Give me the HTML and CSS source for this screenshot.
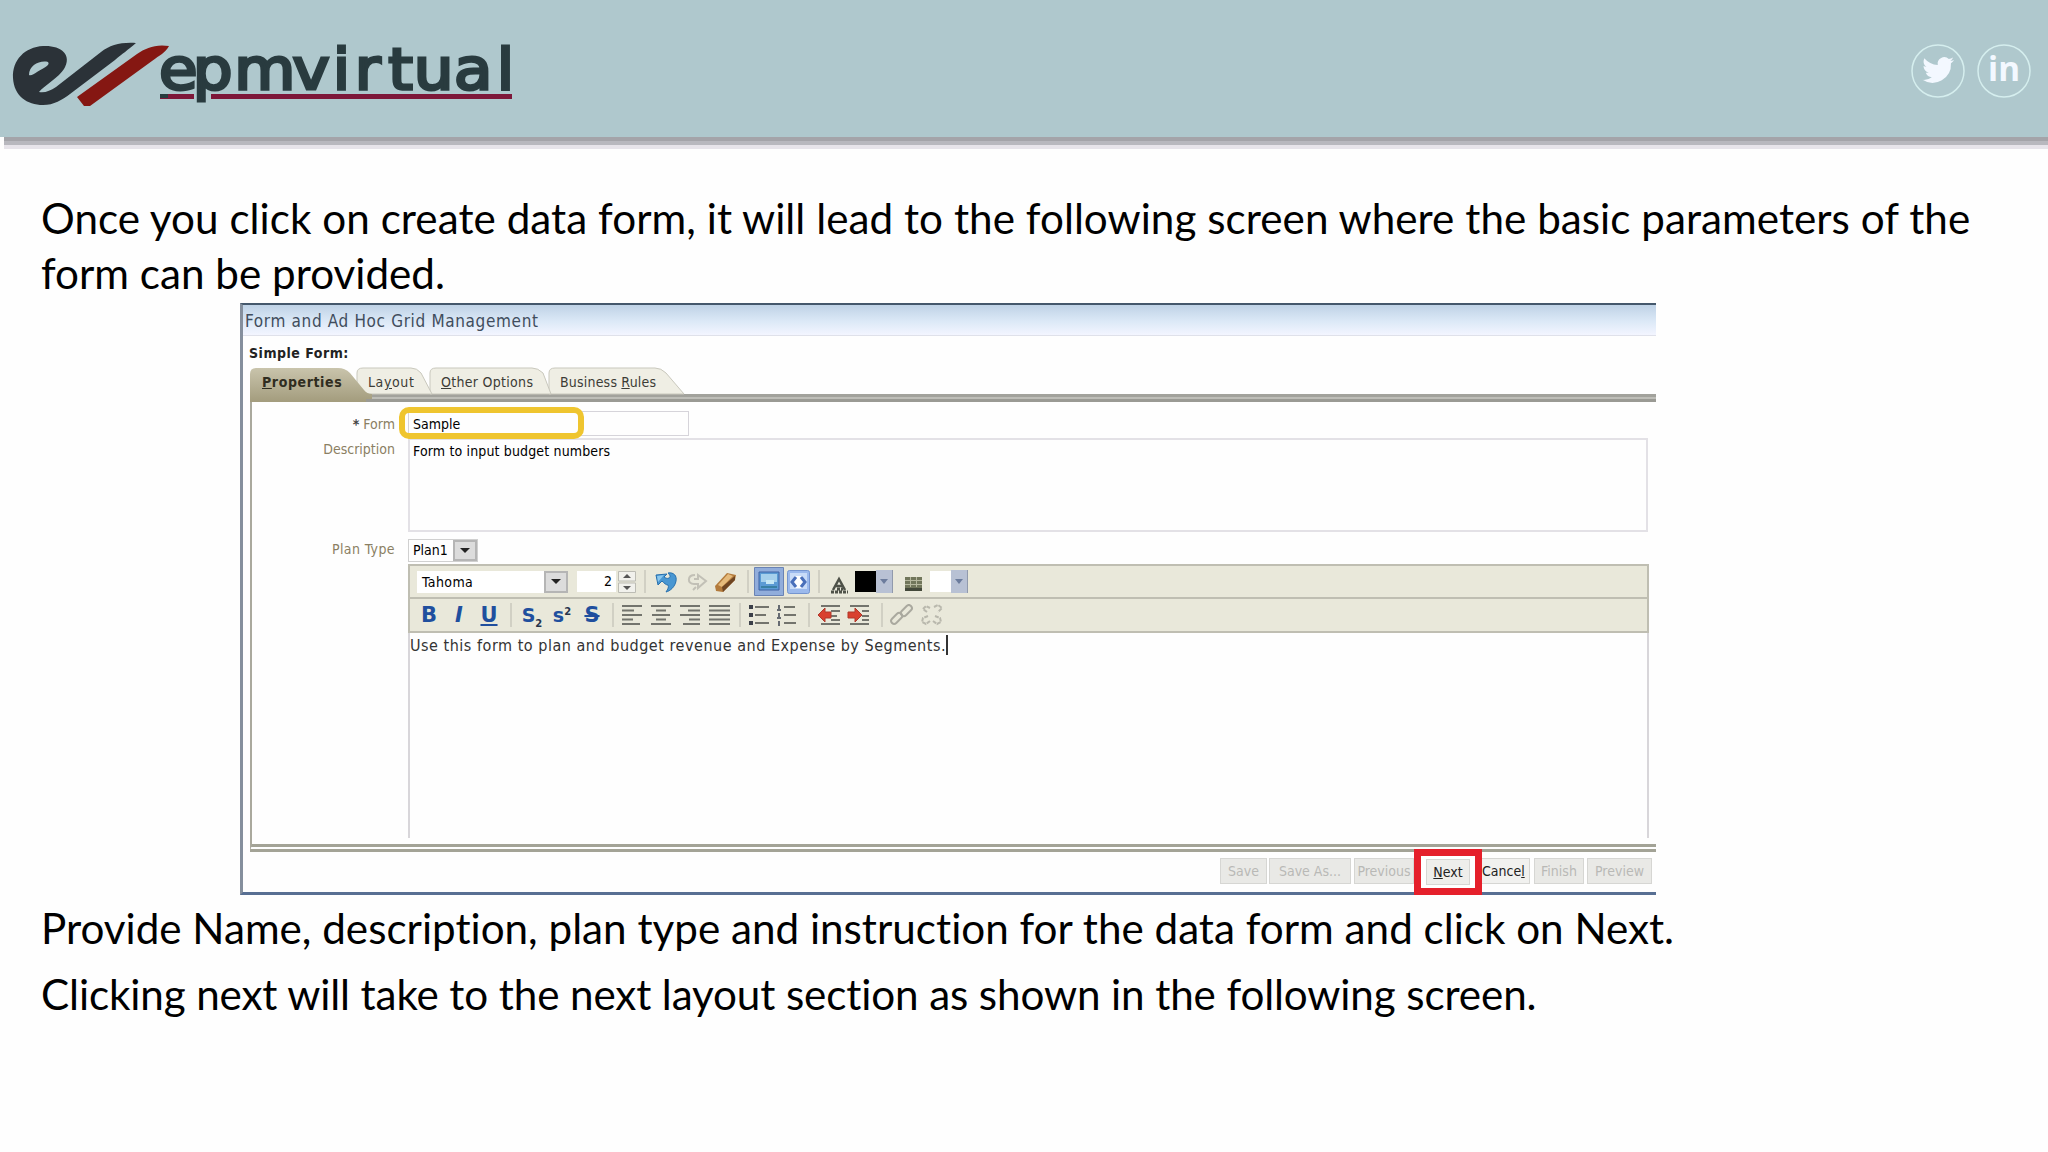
FILE: index.html
```
<!DOCTYPE html>
<html lang="en">
<head>
    <meta charset="UTF-8">
    <meta name="viewport" content="width=device-width, initial-scale=1.0">
    <title>epmvirtual - Create Data Form</title>
    <link rel="stylesheet" href="styles.css">
</head>
<body>

    <header class="header">
        <svg class="logo" width="530" height="80" viewBox="0 0 530 80">
            <path fill="#2b3238" fill-rule="evenodd" d="M136 3C121 2 110 5 101 12L56 47C50 51 45 53 39 52C44 46 59 37 64 29C73 14 60 5 43 6C25 7 12 20 13 38C14 56 27 65 43 65C54 65 62 60 70 54L115 20C122 14 128 10 136 3ZM29 35C29 25 40 20 48 22C51 25 42 29 37 32C34 34 31 36 29 35Z"/>
            <path fill="#851712" d="M169 6C155 4 146 8 137 14L77 57L84 66H90L152 21C160 15 165 13 169 6Z"/>
            <path fill="#7d1739" d="M160 54H194V59H160ZM211 54H512V59H211Z"/>
            <path fill="#293b3f" d="M160 54H168V58H160Z"/>
            <text class="logo-text" transform="scale(1.1 1)" x="144.500 175.300 213 266 302.500 322.500 353 376.200 412.800 451.600" y="49">epmvirtual</text>
        </svg>
        <div class="social">
            <svg width="54" height="54" viewBox="0 0 54 54">
                <circle cx="27" cy="27" r="26" fill="none" stroke="#d5eeee" stroke-width="1.5"/>
                <g transform="translate(11.500 9.500) scale(1.330)"><path fill="#f3f8ff" d="M23.600 4.900c-.9.400-1.800.6-2.800.8 1-.6 1.800-1.600 2.100-2.700-.9.600-2 1-3.100 1.200A4.900 4.900 0 0 0 11.500 8.600C7.500 8.400 3.900 6.500 1.500 3.500.2 5.700.8 8.600 3 10c-.8 0-1.500-.2-2.200-.6 0 2.300 1.600 4.400 3.900 4.900-.7.200-1.500.2-2.200.1.600 1.900 2.400 3.300 4.500 3.400A9.900 9.900 0 0 1 0 19.800a13.900 13.900 0 0 0 21.400-12.400c1-.7 1.800-1.500 2.200-2.500z"/></g>
            </svg>
            <svg width="54" height="54" viewBox="0 0 54 54">
                <circle cx="27" cy="27" r="26" fill="none" stroke="#d5eeee" stroke-width="1.5"/>
                <text class="in-text" x="11" y="37" textLength="32" lengthAdjust="spacingAndGlyphs">in</text>
            </svg>
        </div>
    </header>

    <main class="content">
        <p class="line line-first">Once you click on create data form, it will lead to the following screen where the basic parameters of the</p>
        <p class="line line-second">form can be provided.</p>

        <div class="window">
            <div class="title-bar"><span class="window-title">Form and Ad Hoc Grid Management</span></div>
            <div class="form-name">Simple Form:</div>

            <div class="tabs">
                <svg class="tab-shapes" width="440" height="35" viewBox="0 0 440 35">
                    <defs>
                        <linearGradient id="activeTab" x1="0" y1="0" x2="0" y2="1">
                            <stop offset="0" stop-color="#c9c4ac"/>
                            <stop offset="1" stop-color="#a39c7d"/>
                        </linearGradient>
                    </defs>
                    <g fill="#efeee4" stroke="#c9c8bd">
                        <path d="M299 27V6Q299 1 305 1H405Q411 1 416 6L434 27Z"/>
                        <path d="M180 27V6Q180 1 186 1H282Q288 1 293 6L301 27Z"/>
                        <path d="M107 27V6Q107 1 113 1H161Q167 1 171 6L182 27Z"/>
                    </g>
                    <path fill="url(#activeTab)" d="M0 35V7Q0 1 6 1H88Q95 1 100 6L114 23Q117 27 122 27V32H116V35Z"/>
                </svg>
                <span class="tab tab-active"><u>P</u>roperties</span>
                <span class="tab tab-layout">La<u>y</u>out</span>
                <span class="tab tab-other"><u>O</u>ther Options</span>
                <span class="tab tab-rules">Business <u>R</u>ules</span>
            </div>

            <div class="panel">
                <div class="row row-form">
                    <label class="label"><b>*</b> Form</label>
                    <div class="input"><span class="form-value">Sample</span><div class="highlight"></div></div>
                </div>
                <div class="row row-desc">
                    <label class="label desc-label">Description</label>
                    <div class="textarea"><span class="desc-value">Form to input budget numbers</span></div>
                </div>
                <div class="row row-plan">
                    <label class="label plan-label">Plan Type</label>
                    <div class="select"><span class="plan-value">Plan1</span><span class="arrow"></span></div>
                </div>

                <div class="editor">
                    <div class="toolbar toolbar-top">
                        <div class="font-select"><span class="font-name">Tahoma</span><span class="arrow"></span></div>
                        <div class="size-box">2</div>
                        <svg class="spinner" width="18" height="22" viewBox="0 0 18 22">
                            <path fill="#f1f1ec" stroke="#bcbcb4" d="M.5.500H17.500V10H.500ZM.500 12H17.500V21.500H.500Z"/>
                            <path fill="#555" d="M5 7L9 3L13 7ZM5 15H13L9 19Z"/>
                        </svg>
                        <i class="sep"></i>
                        <svg class="undo" width="24" height="24" viewBox="0 0 24 24">
                            <path fill="#4997d2" stroke="#2770ae" d="M2 5L13 4L10 7C12 8 13 9 15 8C17 7 16 5 14 3C20 2 23 6 22 11C21 17 16 21 12 22C14 19 15 17 14 15C12 15 10 13 8 11L4 15Z"/>
                            <path fill="#8bc8ee" d="M3 6L10 5L4 12Z"/>
                        </svg>
                        <svg class="redo" width="22" height="24" viewBox="0 0 22 24">
                            <path fill="none" stroke="#c2c0b6" stroke-width="2" d="M9 5C1 5 1 14 8 14H12V18L20 11L12 5V9H8M10 17L7 20"/>
                        </svg>
                        <svg class="eraser" width="24" height="24" viewBox="0 0 24 24">
                            <path fill="#b37b3c" d="M1 16L13 3L22 5L21 10L9 22L2 21Z"/>
                            <path fill="#e5ba7b" d="M4 15L14 4L19 6L8 17Z"/>
                            <path fill="#6e4522" d="M8 17L21 6V10L9 22Z"/>
                        </svg>
                        <i class="sep"></i>
                        <svg class="view" width="30" height="29" viewBox="0 0 30 29">
                            <path fill="#91addb" stroke="#6a83b4" d="M.500.500H29.500V28.500H.500Z"/>
                            <path fill="#5b9bd4" stroke="#4063a4" d="M5 5H25V23H5Z"/>
                            <path fill="#a5d0ec" d="M7 7H23V15H7Z"/>
                            <path fill="#c7e8f5" d="M12 13H20V17H12Z"/>
                            <path fill="#3a80a3" d="M7 19H23V21H7Z"/>
                        </svg>
                        <svg class="source" width="23" height="24" viewBox="0 0 23 24">
                            <rect x=".5" y=".5" width="22" height="23" rx="2" fill="#9bb9ec" stroke="#7595cf"/>
                            <path fill="#c9dcf8" d="M3 3H20V19H3Z"/>
                            <path fill="#fff" d="M7 6H16V18H7Z"/>
                            <path fill="none" stroke="#4a70ba" stroke-width="3" d="M9 7L5 12L9 17M14 7L18 12L14 17"/>
                        </svg>
                        <i class="sep"></i>
                        <svg class="color-icon" width="17" height="18" viewBox="0 0 17 18">
                            <path fill="none" stroke="#4e5148" stroke-width="2.500" d="M2 14L8 3L14 14M5 10H12"/>
                            <path stroke="#4e5148" stroke-width="3" stroke-dasharray="3 1" d="M0 16H17M6 13H12"/>
                        </svg>
                        <span class="swatch swatch-black"></span>
                        <span class="swatch-arrow"></span>
                        <svg class="grid-icon" width="17" height="16" viewBox="0 0 17 16">
                            <path fill="#71765b" d="M0 1H17V15H0Z"/>
                            <path stroke="#b6b89f" d="M0 4.500H17M0 8.500H17M5.500 1V11M11.500 1V11"/>
                            <path stroke="#43483a" stroke-width="3" d="M0 13.500H17"/>
                        </svg>
                        <span class="swatch swatch-white"></span>
                        <span class="swatch-arrow"></span>
                    </div>

                    <div class="toolbar toolbar-bottom">
                        <div class="group group-style">
                            <span class="tool">B</span>
                            <span class="tool tool-italic">I</span>
                            <span class="tool"><u>U</u></span>
                        </div>
                        <div class="group group-script">
                            <span class="tool tool-script">S<sub>2</sub></span>
                            <span class="tool tool-script">s<sup>2</sup></span>
                            <span class="tool"><s>S</s></span>
                        </div>
                        <div class="group group-align">
                            <svg width="29" height="22" viewBox="0 0 29 22"><path d="M4 2H24M4 6.500H16M4 11H24M4 15.500H15M4 20H22"/></svg>
                            <svg width="29" height="22" viewBox="0 0 29 22"><path d="M4 2H24M9 6.500H19M5 11H23M9 15.500H19M4 20H24"/></svg>
                            <svg width="29" height="22" viewBox="0 0 29 22"><path d="M4 2H24M12 6.500H24M4 11H24M13 15.500H24M7 20H24"/></svg>
                            <svg width="29" height="22" viewBox="0 0 29 22"><path d="M4 2H25M4 6.500H25M4 11H25M4 15.500H25M4 20H25"/></svg>
                        </div>
                        <div class="group group-list">
                            <svg width="29" height="22" viewBox="0 0 29 22"><path d="M10 3H24M10 11H21M10 19H24"/><path stroke="#3c4049" stroke-width="4" d="M4 3H8M4 11H8M4 19H8"/></svg>
                            <svg width="29" height="22" viewBox="0 0 29 22"><path d="M10 3H21M10 11H22M10 19H22"/><path stroke="#666b72" d="M5 1V6M5 9V14M5 17V22M3 6H7M3 14H7"/></svg>
                        </div>
                        <div class="group group-indent">
                            <svg width="29" height="22" viewBox="0 0 29 22"><path d="M6 2H25M16 7H25M16 12H22M16 16H25M6 20H25"/><path class="red" d="M3 11L10 4V8H16V14H10V18Z"/></svg>
                            <svg width="29" height="22" viewBox="0 0 29 22"><path d="M6 2H25M18 7H25M18 12H25M18 16H25M6 20H25"/><path class="red" d="M18 11L11 4V8H4V14H11V18Z"/></svg>
                        </div>
                        <div class="group group-link">
                            <svg width="30" height="22" viewBox="0 0 30 22"><g fill="none" stroke="#aaa99f" stroke-width="2"><rect x="3" y="11" width="13" height="6" rx="3" transform="rotate(-45 10 14)"/><rect x="13" y="4" width="13" height="6" rx="3" transform="rotate(-45 19 7)"/></g></svg>
                            <svg width="30" height="22" viewBox="0 0 30 22"><g fill="none" stroke="#b9b8ad" stroke-width="2"><path d="M10 8L6 5L9 2L13 4M17 3L21 1L25 4L21 8M11 12L6 14L5 18L9 20L13 17M18 12L23 14L24 18L20 20L16 17" stroke-dasharray="4 1"/></g></svg>
                        </div>
                    </div>
                    <div class="editor-text"><span class="instruction">Use this form to plan and budget revenue and Expense by Segments.</span><i class="caret"></i></div>
                </div>
            </div>

            <div class="buttons">
                <span class="btn btn-save">Save</span>
                <span class="btn btn-save-as">Save As...</span>
                <span class="btn btn-previous">Previous</span>
                <span class="next-box"><span class="btn btn-next"><u>N</u>ext</span></span>
                <span class="btn btn-cancel">Cance<u>l</u></span>
                <span class="btn btn-finish">Finish</span>
                <span class="btn btn-preview">Preview</span>
            </div>
        </div>

        <p class="line line-third">Provide Name, description, plan type and instruction for the data form and click on Next.</p>
        <p class="line line-fourth">Clicking next will take to the next layout section as shown in the following screen.</p>
    </main>

</body>
</html>
```
FILE: styles.css
```
* {
    box-sizing: border-box;
}

body {
    margin: 0;
    height: 1152px;
    overflow: hidden;
    background: #fefefe;
    color: #000;
    font-family: Lato, "Liberation Sans", sans-serif;
}

.header {
    display: flex;
    justify-content: space-between;
    height: 137px;
    padding: 40px 17px 0 0;
    background: #afc8cd;
    box-shadow: 4px 4px 0 #a4a4a9, 4px 8px 0 #b8b8be, 4px 12px 0 #e7e4ea;
}

.logo {
    overflow: visible;
}

.logo-text {
    font-family: "DejaVu Sans", sans-serif;
    font-size: 57px;
    fill: #293b3f;
    stroke: #293b3f;
    stroke-width: 3px;
}

.social {
    display: flex;
    gap: 12px;
    padding-top: 4px;
}

.in-text {
    font-family: "Open Sans", sans-serif;
    font-weight: bold;
    font-size: 34px;
    fill: #f3f8ff;
}

.content {
    padding: 53px 0 0 41px;
}

.line {
    margin: 0;
    height: 55px;
    line-height: 55px;
    font-size: 42.2px;
    font-variant-ligatures: none;
    white-space: nowrap;
}

.line-first {
    letter-spacing: .04px;
}

/* form window */
.window {
    width: 1416px;
    height: 592px;
    margin: 3px 0 0 199px;
    border-top: 2px solid #45586c;
    border-left: 3px solid #858f9d;
    border-bottom: 3px solid #586f93;
    font-family: "DejaVu Sans Condensed", "DejaVu Sans", sans-serif;
    font-size: 14px;
    white-space: nowrap;
}

.title-bar {
    height: 31px;
    padding-left: 2px;
    line-height: 32px;
    background: linear-gradient(#bfd2e6, #dce9f7 55%, #f3f5ff);
    border-bottom: 1px solid #dfe1ea;
    font-size: 17px;
    letter-spacing: .65px;
    color: #414d5d;
}

.form-name {
    height: 31px;
    padding: 5px 0 0 6px;
    line-height: 24px;
    font-weight: bold;
    letter-spacing: .5px;
    color: #222;
}

.tabs {
    display: flex;
    position: relative;
    height: 35px;
    margin-left: 7px;
    line-height: 30px;
    color: #3c3c36;
    background: linear-gradient(#a2a29c, #a2a29c) 0 27px / 100% 3px no-repeat,
                linear-gradient(#bebeb8, #bebeb8) 0 30px / 100% 2px no-repeat,
                linear-gradient(#9a9a94, #9a9a94) 0 32px / 100% 3px no-repeat;
}

.tab-shapes {
    position: absolute;
    left: 0;
    top: 0;
}

.tab {
    position: relative;
}

.tab-active {
    width: 107px;
    padding-left: 12px;
    font-weight: bold;
    letter-spacing: .6px;
    color: #302d20;
}

.tab-layout {
    width: 72px;
    padding-left: 11px;
    letter-spacing: .6px;
}

.tab-other {
    width: 119px;
    padding-left: 12px;
    letter-spacing: .3px;
}

.tab-rules {
    padding-left: 12px;
    letter-spacing: .2px;
}

.panel {
    height: 450px;
    margin-left: 7px;
    padding-top: 9px;
    border-left: 2px solid #aaa99d;
    border-bottom: 8px double #a3a396;
}

.row {
    display: flex;
}

.label {
    width: 143px;
    margin-right: 13px;
    text-align: right;
    color: #8b7f63;
    line-height: 26px;
}

.label b {
    color: #444;
}

.row-form {
    height: 27px;
}

.input {
    position: relative;
    width: 281px;
    height: 25px;
    padding-left: 4px;
    line-height: 25px;
    border: 1px solid #d6d4da;
}

.highlight {
    position: absolute;
    left: -10px;
    top: -5px;
    width: 185px;
    height: 32px;
    border: 6px solid #efc52f;
    border-radius: 10px;
}

.row-desc {
    height: 101px;
}

.desc-label {
    line-height: 23px;
}

.textarea {
    width: 1240px;
    height: 94px;
    padding-left: 3px;
    line-height: 22px;
    letter-spacing: .15px;
    border: 2px solid #e3e1e6;
}

.row-plan {
    height: 25px;
}

.plan-label {
    line-height: 20px;
    letter-spacing: .4px;
}

.select {
    display: flex;
    justify-content: space-between;
    width: 70px;
    height: 23px;
    padding-left: 4px;
    line-height: 21px;
    border: 1px solid #d0d0d0;
}

.arrow {
    display: flex;
    align-items: center;
    justify-content: center;
    width: 24px;
    height: 100%;
    background: #dcdcdc;
    border: 2px solid #b5b5b5;
}

.arrow::after {
    content: "";
    border: 5px solid transparent;
    border-top: 5px solid #222;
    border-bottom: none;
}

.editor {
    width: 1241px;
    height: 274px;
    margin-left: 156px;
    border-left: 2px solid #d8d6da;
    border-right: 2px solid #d8d6da;
}

.toolbar {
    display: flex;
    background: #e9e8da;
    margin: 0 -2px;
    border: 2px solid #bfbeb2;
}

.toolbar-top {
    height: 35px;
    align-items: center;
    padding-left: 7px;
}

.font-select {
    display: flex;
    justify-content: space-between;
    width: 151px;
    height: 22px;
    padding-left: 5px;
    line-height: 23px;
    letter-spacing: .4px;
    background: #fff;
}

.size-box {
    width: 39px;
    height: 21px;
    margin: 0 2px 0 9px;
    padding-right: 4px;
    line-height: 21px;
    text-align: right;
    background: #fff;
}

.sep {
    width: 2px;
    height: 23px;
    margin: 0 8px 0 8px;
    background: #d1d0c4;
}

.redo {
    margin: 0 6px 0 8px;
}

.eraser + .sep {
    margin: 0 5px 0 9px;
}

.view {
    margin-right: 3px;
}

.source + .sep {
    margin: 0 11px 0 8px;
}

.color-icon {
    margin: 6px 7px 0 0;
}

.swatch {
    width: 21px;
    height: 21px;
}

.swatch-black {
    background: #000;
}

.swatch-white {
    background: #fff;
}

.swatch-arrow {
    display: flex;
    align-items: center;
    justify-content: center;
    width: 17px;
    height: 23px;
    background: #b8c1d4;
    border-right: 1px solid #919aac;
}

.swatch-arrow::after {
    content: "";
    border: 4px solid transparent;
    border-top: 5px solid #6c7c9d;
    border-bottom: none;
}

.grid-icon {
    margin: 4px 8px 0 12px;
}

.toolbar-bottom {
    height: 34px;
    border-top: none;
    padding: 4px 0;
}

.group {
    display: flex;
    align-items: center;
    border-right: 2px solid #d1d0c4;
    fill: none;
    stroke: #73746d;
    stroke-width: 2;
}

.group-style {
    width: 102px;
    padding-left: 4px;
}

.group-script {
    width: 102px;
    padding-left: 5px;
}

.group-align {
    width: 127px;
    padding-left: 4px;
}

.group-list {
    width: 69px;
    padding-left: 4px;
}

.group-indent {
    width: 73px;
    padding-left: 5px;
}

.group-link {
    border-right: none;
    padding-left: 4px;
}

.tool {
    width: 30px;
    text-align: center;
    font-family: "DejaVu Sans", sans-serif;
    font-weight: bold;
    font-size: 21px;
    line-height: 24px;
    color: #204f9e;
}

.tool-italic {
    font-style: italic;
}

.tool-script {
    font-size: 19px;
}

.tool sub, .tool sup {
    font-size: 10px;
    line-height: 0;
    color: #26344d;
}

.red {
    fill: #d9412f;
    stroke: #b0382b;
    stroke-width: 1;
}

.editor-text {
    display: flex;
    align-items: center;
    height: 24px;
    font-size: 16px;
    letter-spacing: .52px;
    color: #333;
}

.caret {
    width: 2px;
    height: 20px;
    background: #333;
}

.buttons {
    display: flex;
    height: 40px;
    padding: 6px 0 0 977px;
    line-height: 25px;
}

.btn {
    height: 26px;
    overflow: hidden;
    text-align: center;
    background: #e9e9e6;
    border: 1px solid #d6d6d3;
    color: #b9b9b6;
}

.btn-save {
    width: 47px;
    margin-right: 2px;
}

.btn-save-as {
    width: 82px;
    margin-right: 3px;
}

.btn-previous {
    width: 60px;
}

.next-box {
    z-index: 1;
    width: 68px;
    height: 46px;
    margin-top: -9px;
    padding: 3px 5px;
    background: #fff;
    border: 7px solid #e5202b;
}

.btn-next {
    display: block;
    background: #eeeeeb;
    color: #222;
}

.btn-cancel {
    width: 48px;
    margin-right: 4px;
    text-align: left;
    background: #f1f1ef;
    border-left: none;
    color: #222;
}

.btn-finish {
    width: 50px;
    margin-right: 3px;
}

.btn-preview {
    width: 65px;
}

.line-third {
    margin-top: 5px;
}

.line-fourth {
    margin-top: 11px;
    letter-spacing: -.12px;
}
```
